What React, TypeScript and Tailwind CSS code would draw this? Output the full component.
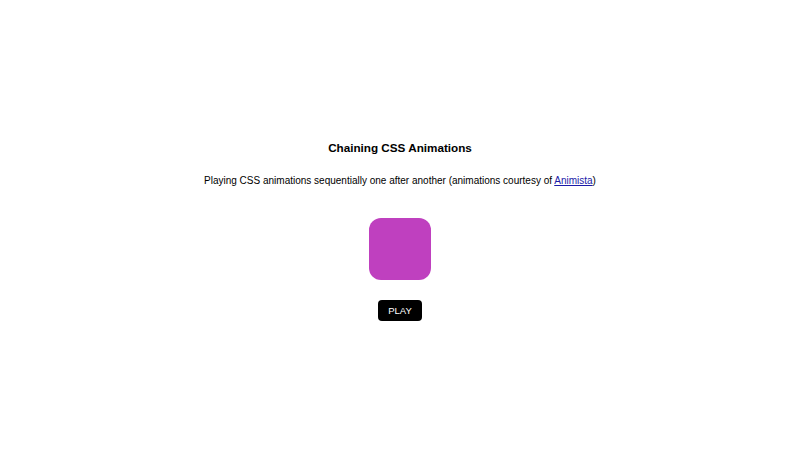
export default function App() {
  return (
    <div
      className="w-[800px] h-[450px] bg-white flex flex-col items-center text-black"
      style={{ fontFamily: '"Liberation Sans", Arial, sans-serif' }}
    >
      <h1 className="mt-[140px] text-[11.7px] leading-[16px] font-bold">Chaining CSS Animations</h1>
      <p className="mt-[18px] text-[10px] leading-[14px]">
        Playing CSS animations sequentially one after another (animations courtesy of{" "}
        <a href="#" className="text-[#1a1aa8] underline">Animista</a>)
      </p>
      <div className="mt-[30px] w-[62px] h-[62px] rounded-[12px] bg-[#bf40bf]" />
      <button className="mt-[20px] w-[44px] h-[21px] rounded-[4px] bg-black text-white text-[9.5px] leading-none flex items-center justify-center">
        PLAY
      </button>
    </div>
  );
}
